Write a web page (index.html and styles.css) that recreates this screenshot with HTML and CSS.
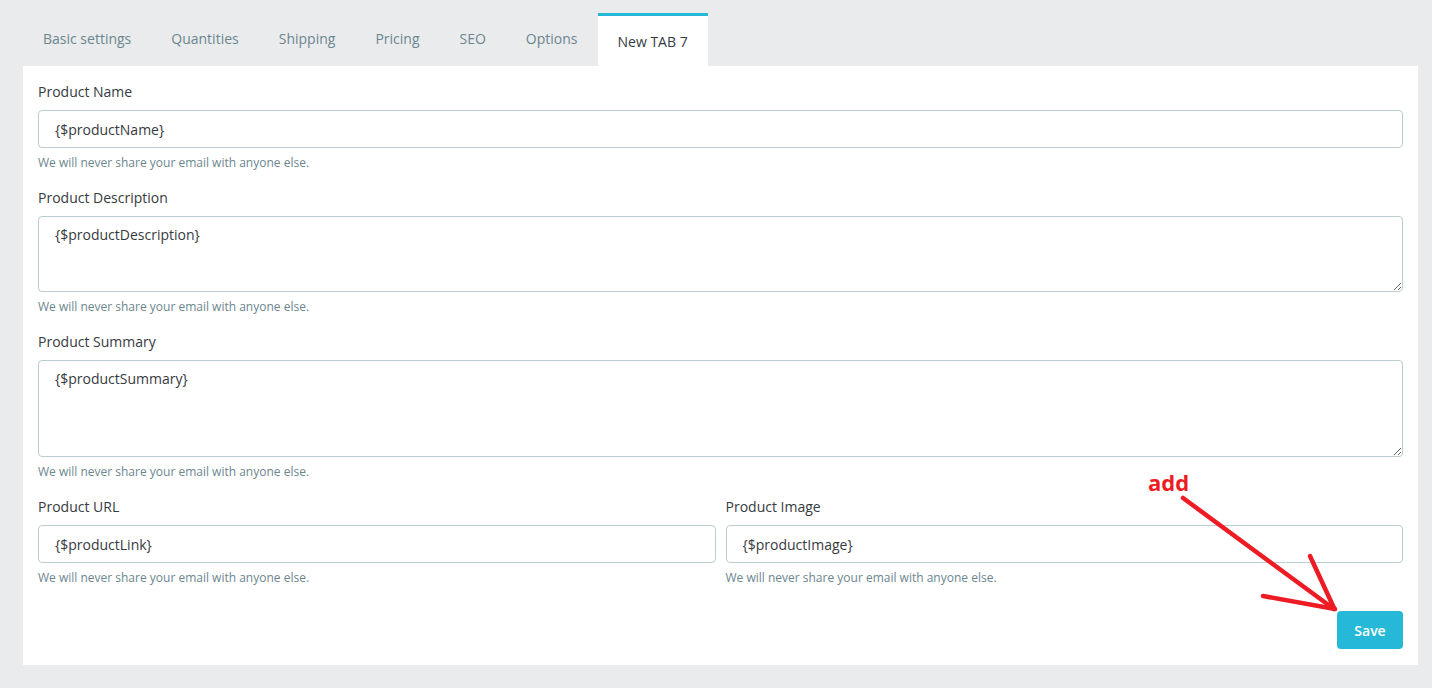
FILE: index.html
```html
<!DOCTYPE html>
<html>
<head>
<meta charset="utf-8">
<link rel="stylesheet" href="styles.css">
</head>
<body>
<div class="page">
  <nav class="tabs">
    <a class="tab">Basic settings</a>
    <a class="tab">Quantities</a>
    <a class="tab">Shipping</a>
    <a class="tab">Pricing</a>
    <a class="tab">SEO</a>
    <a class="tab">Options</a>
    <a class="tab active">New TAB 7</a>
  </nav>
  <div class="panel">
    <div class="group">
      <label class="label">Product Name</label>
      <input class="control" value="{$productName}">
      <div class="help">We will never share your email with anyone else.</div>
    </div>
    <div class="group">
      <label class="label">Product Description</label>
      <textarea class="control area-sm">{$productDescription}</textarea>
      <div class="help">We will never share your email with anyone else.</div>
    </div>
    <div class="group">
      <label class="label">Product Summary</label>
      <textarea class="control area-lg">{$productSummary}</textarea>
      <div class="help">We will never share your email with anyone else.</div>
    </div>
    <div class="row">
      <div class="group">
        <label class="label">Product URL</label>
        <input class="control" value="{$productLink}">
        <div class="help">We will never share your email with anyone else.</div>
      </div>
      <div class="group">
        <label class="label">Product Image</label>
        <input class="control" value="{$productImage}">
        <div class="help">We will never share your email with anyone else.</div>
      </div>
    </div>
    <div class="actions">
      <button class="btn">Save</button>
    </div>
  </div>
  <div class="note">add</div>
  <svg class="arrow" width="1432" height="688" viewBox="0 0 1432 688">
    <g stroke="#ed1c24" stroke-width="4.5" stroke-linecap="round" fill="none">
      <line x1="1183" y1="498" x2="1334" y2="609"/>
      <line x1="1310" y1="556" x2="1334" y2="608"/>
      <line x1="1263" y1="596" x2="1335" y2="609"/>
    </g>
  </svg>
</div>
</body>
</html>
```

FILE: styles.css
```css
* { box-sizing: border-box; }
html, body { margin: 0; padding: 0; }
body {
  background: #eaebed;
  font-family: "Open Sans", "Noto Sans", Arial, sans-serif;
  color: #363a41;
}
.page {
  position: relative;
  width: 1432px;
  height: 688px;
  padding: 13px 14px 23px 23px;
}
.tabs {
  display: flex;
  height: 53px;
}
.tab {
  height: 53px;
  padding: 16px 20px 0 20px;
  font-size: 14px;
  line-height: 20px;
  color: #6c868e;
  white-space: nowrap;
}
.tab.active {
  background: #fff;
  border-top: 3px solid #25b9d7;
  color: #363a41;
  padding-left: 20px;
  padding-right: 20px;
}
.panel {
  background: #fff;
  padding: 15px 15px 16px 15px;
}
.group {
  margin-bottom: 16px;
  display: flex;
  flex-direction: column;
}
.label {
  font-size: 14px;
  line-height: 21px;
  margin-bottom: 8px;
  color: #363a41;
}
.control {
  display: block;
  width: 100%;
  height: 38px;
  border: 1px solid #bbcdd2;
  border-radius: 4px;
  padding: 0 16px;
  font-family: "Open Sans", "Noto Sans", Arial, sans-serif;
  font-size: 14px;
  color: #363a41;
  background: #fff;
  outline: none;
}
textarea.control {
  padding-top: 8px;
  line-height: 20px;
  resize: vertical;
}
.area-sm { height: 76px; }
.area-lg { height: 97px; }
.help {
  margin-top: 6px;
  font-size: 12px;
  line-height: 17px;
  color: #6c868e;
}
.row {
  display: grid;
  grid-template-columns: 1fr 1fr;
  column-gap: 10px;
}
.row .group { margin-bottom: 0; }
.actions {
  display: flex;
  justify-content: flex-end;
  margin-top: 25px;
}
.btn {
  width: 66px;
  height: 38px;
  border: none;
  border-radius: 4px;
  background: #25b9d7;
  color: #fff;
  font-family: "Open Sans", "Noto Sans", Arial, sans-serif;
  font-weight: 600;
  font-size: 14px;
}
.note {
  position: absolute;
  left: 1148px;
  top: 467px;
  font-size: 22px;
  font-weight: 700;
  color: #ed1c24;
  line-height: 30px;
}
.arrow {
  position: absolute;
  left: 0;
  top: 0;
  pointer-events: none;
}
```
